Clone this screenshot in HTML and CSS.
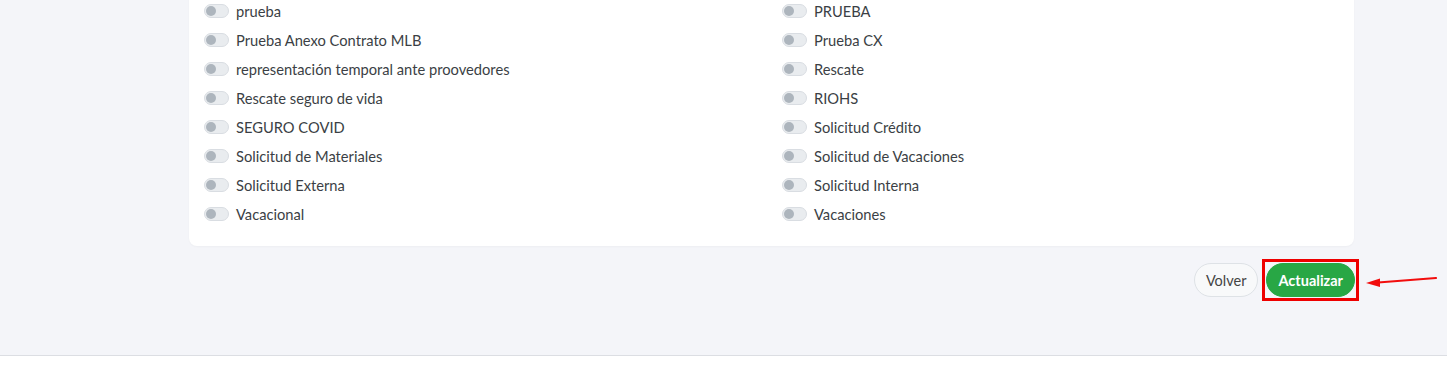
FILE: index.html
```html
<!DOCTYPE html>
<html lang="es">
  <head>
    <meta charset="UTF-8" />
    <meta name="viewport" content="width=device-width, initial-scale=1.0" />
    <title>Tipos de solicitud</title>
    <link rel="stylesheet" href="styles.css">
  </head>
  <body>
    <div class="page">
      <div class="card">
        <div class="switch-grid">
          <label class="switch-row"><span class="switch"></span>prueba</label>
          <label class="switch-row"><span class="switch"></span>PRUEBA</label>
          <label class="switch-row"><span class="switch"></span>Prueba Anexo Contrato MLB</label>
          <label class="switch-row"><span class="switch"></span>Prueba CX</label>
          <label class="switch-row"><span class="switch"></span>representación temporal ante proovedores</label>
          <label class="switch-row"><span class="switch"></span>Rescate</label>
          <label class="switch-row"><span class="switch"></span>Rescate seguro de vida</label>
          <label class="switch-row"><span class="switch"></span>RIOHS</label>
          <label class="switch-row"><span class="switch"></span>SEGURO COVID</label>
          <label class="switch-row"><span class="switch"></span>Solicitud Crédito</label>
          <label class="switch-row"><span class="switch"></span>Solicitud de Materiales</label>
          <label class="switch-row"><span class="switch"></span>Solicitud de Vacaciones</label>
          <label class="switch-row"><span class="switch"></span>Solicitud Externa</label>
          <label class="switch-row"><span class="switch"></span>Solicitud Interna</label>
          <label class="switch-row"><span class="switch"></span>Vacacional</label>
          <label class="switch-row"><span class="switch"></span>Vacaciones</label>
        </div>
      </div>

      <div class="actions">
        <button class="btn btn-light">Volver</button>
        <div class="highlight">
          <button class="btn btn-success">Actualizar</button>
          <!-- annotation arrow -->
          <svg class="arrow" width="74" height="14" viewBox="0 0 74 14">
            <line x1="71" y1="3" x2="13" y2="7.5" stroke="#f20d0d" stroke-width="2.2" stroke-linecap="round" />
            <polygon points="1,8 15,3.5 15,12" fill="#f20d0d" />
          </svg>
        </div>
      </div>
    </div>
    <footer class="footer"></footer>
  </body>
</html>
```

FILE: styles.css
```css
body {
  margin: 0;
  font-family: "Lato", "Noto Sans", sans-serif;
  font-size: 14.7px;
  color: #3b3f45;
  background-color: #fff;
}

.page {
  background-color: #f4f5f9;
  height: 355px;
  padding: 0 93px 0 189px;
  overflow: hidden;
}

.card {
  margin-top: -3px;
  background-color: #fff;
  border-radius: 0 0 8px 8px;
  padding: 0 15px 18px 15px;
  box-shadow: 0 1px 2px rgba(0, 0, 0, 0.03);
}

.switch-grid {
  display: grid;
  grid-template-columns: 557px 557px;
  column-gap: 21px;
}

.switch-row {
  display: flex;
  align-items: center;
  height: 28.9px;
  gap: 7px;
}

.switch {
  position: relative;
  width: 23px;
  height: 12px;
  border: 1px solid #d9dde2;
  border-radius: 7px;
  background-color: #e9ecef;
  flex-shrink: 0;
}

.switch::before {
  content: "";
  position: absolute;
  left: 1px;
  top: 1px;
  width: 10px;
  height: 10px;
  border-radius: 50%;
  background-color: #adb5bd;
}

.actions {
  display: flex;
  justify-content: flex-end;
  align-items: center;
  gap: 4px;
  margin-top: 13px;
}

.highlight {
  position: relative;
  border: 3px solid #ee0000;
  padding: 1px;
  margin-right: -5px;
}

.btn {
  font-family: inherit;
  font-size: 14.5px;
  height: 34px;
  border-radius: 17px;
  padding: 0 11px;
  cursor: pointer;
}

.btn-light {
  background-color: #f8f9fa;
  border: 1px solid #dee2e6;
  color: #444;
}

.btn-success {
  background-color: #28a745;
  border: 1px solid #28a745;
  color: #fff;
  font-weight: bold;
  padding: 0 11px;
  display: block;
}

.arrow {
  position: absolute;
  left: 100%;
  top: 13px;
  margin-left: 9px;
}

.footer {
  height: 13px;
  border-top: 1px solid #dcdee3;
  background-color: #fff;
}
```
